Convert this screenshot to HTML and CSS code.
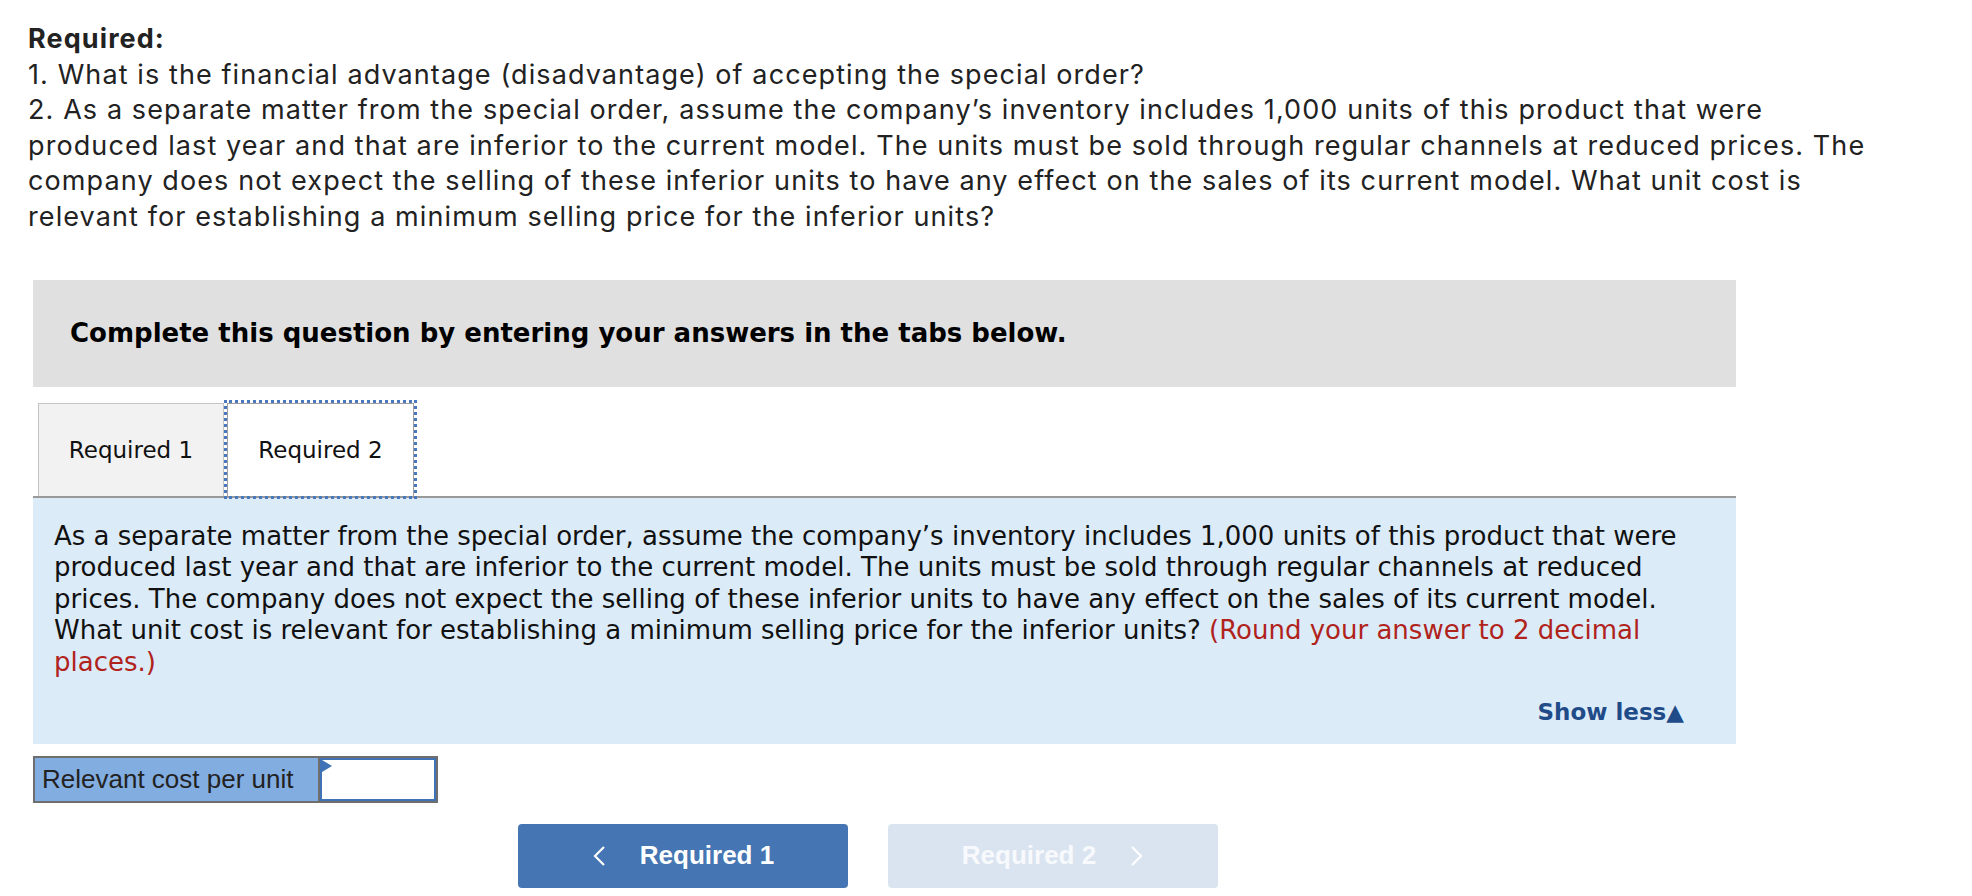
FILE: index.html
```html
<!DOCTYPE html>
<html lang="en">
<head>
    <meta charset="UTF-8">
    <meta name="viewport" content="width=device-width, initial-scale=1.0">
    <title>Required 2</title>
    <link rel="stylesheet" href="styles.css">
</head>
<body>
    <div class="page">
        <div class="intro">
            <p class="intro-title">Required:</p>
            <p>1. What is the financial advantage (disadvantage) of accepting the special order?</p>
            <p>2. As a separate matter from the special order, assume the company’s inventory includes 1,000 units of this product that were produced last year and that are inferior to the current model. The units must be sold through regular channels at reduced prices. The company does not expect the selling of these inferior units to have any effect on the sales of its current model. What unit cost is relevant for establishing a minimum selling price for the inferior units?</p>
        </div>

        <div class="question">
            <div class="instructions">Complete this question by entering your answers in the tabs below.</div>

            <div class="tabs">
                <div class="tab">Required 1</div>
                <div class="tab active">Required 2</div>
            </div>

            <div class="tab-panel">
                <p>As a separate matter from the special order, assume the company’s inventory includes 1,000 units of this product that were produced last year and that are inferior to the current model. The units must be sold through regular channels at reduced prices. The company does not expect the selling of these inferior units to have any effect on the sales of its current model. What unit cost is relevant for establishing a minimum selling price for the inferior units? <span class="hint">(Round your answer to 2 decimal places.)</span></p>
                <div class="show-less">Show less&#9650;</div>
            </div>

            <div class="answer">
                <div class="answer-label">Relevant cost per unit</div>
                <div class="answer-input"></div>
            </div>

            <div class="nav">
                <a class="nav-btn prev">
                    <svg width="14" height="22" viewBox="0 0 14 22"><polyline points="12,2 3,11 12,20" fill="none" stroke="#fff" stroke-width="2.2"/></svg>
                    <span>Required 1</span>
                </a>
                <a class="nav-btn next disabled">
                    <span>Required 2</span>
                    <svg width="14" height="22" viewBox="0 0 14 22"><polyline points="2,2 11,11 2,20" fill="none" stroke="#fff" stroke-width="2.2"/></svg>
                </a>
            </div>
        </div>
    </div>
</body>
</html>
```

FILE: styles.css
```css
/* Reset */
* {
    margin: 0;
    padding: 0;
    box-sizing: border-box;
}

body {
    background: #fff;
    color: #222;
}

.page {
    padding: 21px 0 0 28px;
}

/* Intro text */
.intro {
    font-family: Inter, Lato, sans-serif;
    font-size: 27px;
    letter-spacing: 1.1px;
    line-height: 35.6px;
    color: #222;
    max-width: 1860px;
}

.intro-title {
    font-weight: bold;
}

/* Question area */
.question {
    margin: 45px 0 0 5px;
    width: 1703px;
    font-family: "DejaVu Sans", Verdana, sans-serif;
}

.instructions {
    height: 107px;
    display: flex;
    align-items: center;
    padding-left: 37px;
    background: #e0e0e0;
    font-size: 26px;
    font-weight: bold;
    color: #000;
}

/* Tabs */
.tabs {
    display: flex;
    margin-top: 16px;
    padding-left: 5px;
    border-bottom: 2px solid #999;
}

.tab {
    height: 93px;
    display: flex;
    align-items: center;
    justify-content: center;
    font-size: 23px;
    color: #111;
    border: 1px solid #c4c4c4;
    border-bottom: none;
    background: #f2f2f2;
}

.tab:first-child {
    width: 186px;
}

.tab.active {
    width: 187px;
    margin-left: 3px;
    background: #fff;
    border-color: #a0a0a0;
    outline: 3px dotted #4a78bd;
    outline-offset: 0;
}

.tab-panel {
    background: #dcebf8;
    padding: 23px 40px 19px 21px;
    font-size: 26px;
    line-height: 31.6px;
    color: #111;
}

.hint {
    color: #b0231c;
}

.show-less {
    margin: 20px 12px 0 0;
    text-align: right;
    font-size: 23px;
    line-height: 26px;
    font-weight: bold;
    color: #1f4b88;
}

/* Answer row */
.answer {
    display: flex;
    width: 405px;
    height: 47px;
    margin-top: 12px;
    border: 2px solid #6e6e6e;
    font-family: "Liberation Sans", Arial, sans-serif;
}

.answer-label {
    width: 285px;
    display: flex;
    align-items: center;
    padding-left: 7px;
    background: #82ade1;
    border-right: 2px solid #6e6e6e;
    font-size: 26px;
    color: #222;
}

.answer-input {
    flex: 1;
    position: relative;
    background: #fff;
    border: 2px solid #3f73b6;
}

.answer-input::before {
    content: "";
    position: absolute;
    top: 0;
    left: 0;
    border-top: 6.5px solid transparent;
    border-bottom: 6.5px solid transparent;
    border-left: 10px solid #3f73b6;
}

/* Navigation buttons */
.nav {
    display: flex;
    gap: 40px;
    margin-top: 21px;
    padding-left: 485px;
}

.nav-btn {
    width: 330px;
    height: 64px;
    display: flex;
    align-items: center;
    justify-content: center;
    gap: 34px;
    border-radius: 4px;
    background: #4576b3;
    color: #fff;
    font-family: "Liberation Sans", Arial, sans-serif;
    font-size: 26px;
    font-weight: bold;
    text-decoration: none;
    cursor: pointer;
}

.nav-btn.disabled {
    background: #dae4f0;
    color: #f7f9fc;
    cursor: default;
}
```
